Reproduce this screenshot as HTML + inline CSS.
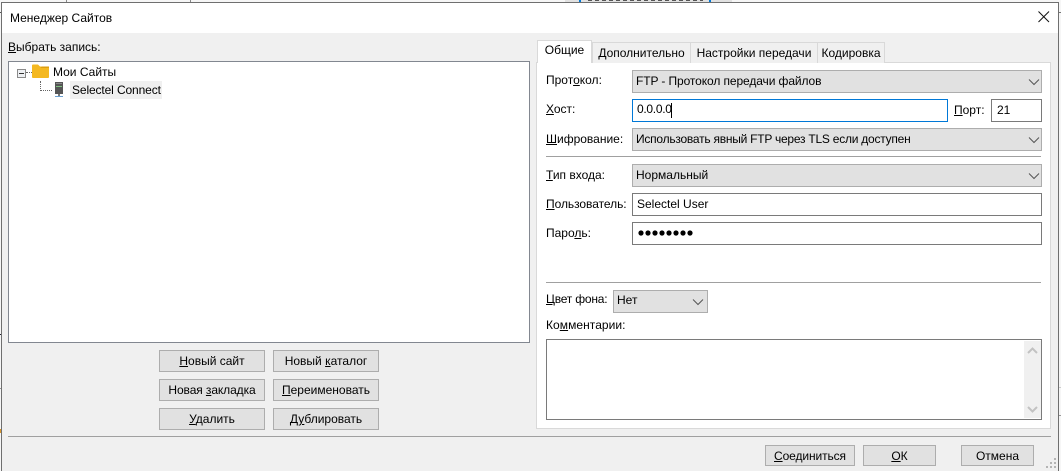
<!DOCTYPE html>
<html lang="ru"><head><meta charset="utf-8"><title>Менеджер Сайтов</title>
<style>
html,body{margin:0;padding:0;width:1061px;height:471px;overflow:hidden;background:#f6f6f6}
*{box-sizing:border-box}
body{font:12px/16px "Liberation Sans",sans-serif;color:#000;position:relative}
.a{position:absolute}
.t{position:absolute;white-space:nowrap;height:16px;line-height:16px}
.c{position:absolute;background:#e1e1e1;border:1px solid #adadad;white-space:nowrap;line-height:20px;padding-left:3px}
.i{position:absolute;background:#fff;border:1px solid #7a7a7a;white-space:nowrap;line-height:20px;padding-left:4px}
.b{position:absolute;background:#e1e1e1;border:1px solid #adadad;text-align:center;white-space:nowrap;line-height:20px}
.h{position:absolute;height:1px;background:#a0a0a0}
.tab{position:absolute;top:42px;height:21px;background:#f0f0f0;border:1px solid #d9d9d9;border-bottom:0;text-align:center;line-height:20px;white-space:nowrap}
svg.ar{position:absolute;width:12px;height:8px}
u{text-underline-offset:1px}
</style></head><body>
<div class="a" style="left:565px;top:0;width:167px;height:2px;background:#e1e1e1"></div>
<div class="a" style="left:579px;top:0;width:132px;height:2px;background:#0078d7"></div>
<div class="a" style="left:581px;top:0;width:128px;height:2px;background:#e1e1e1"></div>
<div class="a" style="left:588px;top:0;width:115px;height:1px;background:repeating-linear-gradient(90deg,#555 0 4px,#e1e1e1 4px 7px)"></div>
<div class="a" style="left:66px;top:0;width:1px;height:2px;background:#888"></div>
<div class="a" style="left:190px;top:0;width:1px;height:2px;background:#888"></div>
<div class="a" style="left:0;top:12px;width:1px;height:1px;background:#555"></div>
<div class="a" style="left:0;top:334px;width:1px;height:1px;background:#223"></div>
<div class="a" style="left:0;top:388px;width:1px;height:1px;background:#999"></div>
<div class="a" style="left:0;top:429px;width:1px;height:4px;background:#d9962a"></div>
<div class="a" style="left:1059px;top:12px;width:2px;height:1px;background:#777"></div>
<div class="a" style="left:1059px;top:387px;width:2px;height:1px;background:#ccc"></div>
<div class="a" style="left:1059px;top:415px;width:2px;height:1px;background:#999"></div>
<div class="a" style="left:1px;top:2px;width:1058px;height:469px;background:#f0f0f0;border:1px solid #6f6f6f;border-bottom:0"></div>
<div class="a" style="left:2px;top:3px;width:1056px;height:30px;background:#fff"></div>
<div class="t" style="left:10px;top:10px">Менеджер Сайтов</div>
<svg class="a" style="left:1038px;top:11px" width="12" height="12" viewBox="0 0 12 12"><path d="M.5.5l10.500 10.500M11 .5L.5 11" stroke="#111" fill="none"/></svg>

<div class="t" style="left:8px;top:39px"><u>В</u>ыбрать запись:</div>
<div class="a" style="left:8px;top:61px;width:522px;height:282px;background:#fff;border:1px solid #828790"></div>
<div class="a" style="left:17px;top:69px;width:9px;height:9px;border:1px solid #8a8a8a;background:#eef0f3"></div>
<div class="a" style="left:19px;top:73px;width:5px;height:1px;background:#333"></div>
<div class="a" style="left:26px;top:72px;width:6px;border-top:1px dotted #666"></div>
<svg class="a" style="left:32px;top:64px" width="17" height="14" viewBox="0 0 17 14"><path d="M0 1.500Q0 .5 1 .5h5l2 2h8q1 0 1 1V13q0 1-1 1H1q-1 0-1-1z" fill="#f4b821"/><path d="M0 4h8l2-1.500h7V4H0z" fill="#dd9e10"/></svg>
<div class="t" style="left:53px;top:64px">Мои Сайты</div>
<div class="a" style="left:40px;top:81px;height:10px;border-left:1px dotted #666"></div>
<div class="a" style="left:40px;top:90px;width:12px;border-top:1px dotted #666"></div>
<svg class="a" style="left:54px;top:81px" width="10" height="17" viewBox="0 0 10 17"><rect x="1" y="1" width="8" height="12" fill="#555"/><rect x="2" y="5" width="6" height="1" fill="#7fc07f"/><rect x="2" y="2" width="6" height="1" fill="#888"/><rect x="4" y="13" width="2" height="2" fill="#777"/><rect x="1" y="15" width="8" height="1" fill="#6a9fd0"/></svg>
<div class="a" style="left:70px;top:81px;width:92px;height:18px;background:#f0f0f0"></div>
<div class="t" style="left:72px;top:82px;letter-spacing:-.12px">Selectel Connect</div>

<div class="b" style="left:159px;top:350px;width:106px;height:22px"><u>Н</u>овый сайт</div>
<div class="b" style="left:273px;top:350px;width:106px;height:22px">Новый <u>к</u>аталог</div>
<div class="b" style="left:159px;top:379px;width:106px;height:22px;letter-spacing:-.1px">Новая <u>з</u>акладка</div>
<div class="b" style="left:273px;top:379px;width:106px;height:22px"><u>П</u>ереименовать</div>
<div class="b" style="left:159px;top:408px;width:106px;height:22px"><u>У</u>далить</div>
<div class="b" style="left:273px;top:408px;width:106px;height:22px">Д<u>у</u>блировать</div>

<div class="a" style="left:536px;top:62px;width:515px;height:367px;background:#fff;border:1px solid #d9d9d9"></div>
<div class="tab" style="left:592px;width:99px">Дополнительно</div>
<div class="tab" style="left:690px;width:128px">Настройки передачи</div>
<div class="tab" style="left:817px;width:68px">Кодировка</div>
<div class="tab" style="left:537px;top:40px;width:55px;height:23px;background:#fff;line-height:19px">Общие</div>

<div class="t" style="left:546px;top:72px">Прот<u>о</u>кол:</div>
<div class="c" style="left:632px;top:70px;width:410px;height:23px;letter-spacing:-.1px">FTP - Протокол передачи файлов</div>
<svg class="ar" style="left:1028px;top:78px"><path d="M1 1.500l5 5 5-5" stroke="#555" fill="none"/></svg>
<div class="t" style="left:546px;top:101px"><u>Х</u>ост:</div>
<div class="i" style="left:632px;top:99px;width:316px;height:23px;border-color:#0078d7;line-height:19px;letter-spacing:-.3px">0.0.0.0</div>
<div class="a" style="left:671px;top:103px;width:1px;height:15px;background:#000"></div>
<div class="t" style="left:954px;top:102px"><u>П</u>орт:</div>
<div class="i" style="left:991px;top:99px;width:51px;height:23px;padding-left:5px">21</div>
<div class="t" style="left:546px;top:131px"><u>Ш</u>ифрование:</div>
<div class="c" style="left:632px;top:128px;width:410px;height:23px;letter-spacing:-.24px">Использовать явный FTP через TLS если доступен</div>
<svg class="ar" style="left:1028px;top:136px"><path d="M1 1.500l5 5 5-5" stroke="#555" fill="none"/></svg>
<div class="h" style="left:546px;top:156px;width:495px"></div>
<div class="t" style="left:546px;top:167px"><u>Т</u>ип входа:</div>
<div class="c" style="left:632px;top:164px;width:410px;height:23px;line-height:21px">Нормальный</div>
<svg class="ar" style="left:1028px;top:172px"><path d="M1 1.500l5 5 5-5" stroke="#555" fill="none"/></svg>
<div class="t" style="left:546px;top:196px;letter-spacing:-.05px"><u>П</u>ользователь:</div>
<div class="i" style="left:632px;top:193px;width:410px;height:23px">Selectel User</div>
<div class="t" style="left:546px;top:225px">Паро<u>л</u>ь:</div>
<div class="i" style="left:632px;top:222px;width:410px;height:23px"></div>
<svg class="a" style="left:638px;top:229px" width="56" height="8" viewBox="0 0 56 8" fill="#000"><circle cx="3" cy="4" r="2.600"/><circle cx="10" cy="4" r="2.600"/><circle cx="17" cy="4" r="2.600"/><circle cx="24" cy="4" r="2.600"/><circle cx="31" cy="4" r="2.600"/><circle cx="38" cy="4" r="2.600"/><circle cx="45" cy="4" r="2.600"/><circle cx="52" cy="4" r="2.600"/></svg>
<div class="h" style="left:546px;top:282px;width:495px"></div>
<div class="t" style="left:546px;top:291px;letter-spacing:-.2px"><u>Ц</u>вет фона:</div>
<div class="c" style="left:613px;top:290px;width:95px;height:23px;line-height:19px">Нет</div>
<svg class="ar" style="left:692px;top:298px"><path d="M1 1.500l5 5 5-5" stroke="#555" fill="none"/></svg>
<div class="t" style="left:546px;top:317px;letter-spacing:.05px">Ко<u>м</u>ментарии:</div>
<div class="a" style="left:546px;top:339px;width:496px;height:81px;background:#fff;border:1px solid #7a7a7a"></div>
<div class="a" style="left:1024px;top:341px;width:17px;height:77px;background:#f0f0f0"></div>
<svg class="a" style="left:1027px;top:347px" width="11" height="7"><path d="M1 6l4.500-4.500L10 6" stroke="#c2c2c2" stroke-width="2" fill="none"/></svg>
<svg class="a" style="left:1027px;top:406px" width="11" height="7"><path d="M1 1l4.500 4.500L10 1" stroke="#c2c2c2" stroke-width="2" fill="none"/></svg>

<div class="h" style="left:8px;top:436px;width:1043px"></div>
<div class="b" style="left:765px;top:445px;width:90px;height:21px;letter-spacing:-.1px"><u>С</u>оединиться</div>
<div class="b" style="left:863px;top:445px;width:73px;height:21px"><u>О</u>К</div>
<div class="b" style="left:961px;top:445px;width:73px;height:21px">Отмена</div>
<svg class="a" style="left:1046px;top:458px" width="12" height="12" fill="#b4b4b4"><rect x="8" y="0" width="2" height="2"/><rect x="4" y="4" width="2" height="2"/><rect x="8" y="4" width="2" height="2"/><rect x="0" y="8" width="2" height="2"/><rect x="4" y="8" width="2" height="2"/><rect x="8" y="8" width="2" height="2"/></svg>
</body></html>
